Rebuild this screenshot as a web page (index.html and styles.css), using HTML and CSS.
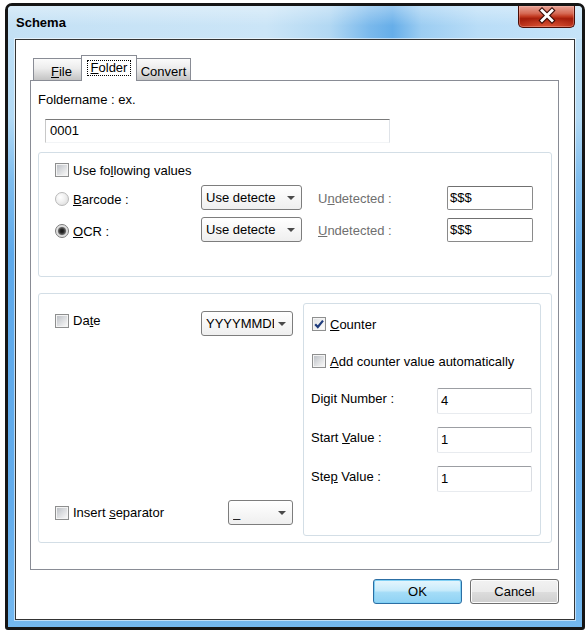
FILE: index.html
```html
<!DOCTYPE html>
<html>
<head>
<meta charset="utf-8">
<title>Schema</title>
<link rel="stylesheet" href="styles.css">
</head>
<body>
<div class="window">
  <div class="titlebar">
    <span class="title">Schema</span>
    <div class="close">
      <svg width="57" height="22" viewBox="0 0 57 22">
        <path d="M24 11 L34 21 M34 11 L24 21" transform="translate(0 -5.5)" stroke="#3a0b05" stroke-width="5" stroke-linecap="square" fill="none"/>
        <path d="M24 11 L34 21 M34 11 L24 21" transform="translate(0 -5.5)" stroke="#ffffff" stroke-width="2.8" stroke-linecap="square" fill="none"/>
      </svg>
    </div>
  </div>
  <div class="client">
    <div class="tabs">
      <div class="tab tab-file"><u>F</u>ile</div>
      <div class="tab tab-active"><span class="focus"><u>F</u>older</span></div>
      <div class="tab tab-convert">Convert</div>
    </div>
    <div class="panel">
      <div class="top-label">Foldername : ex.</div>
      <div class="tb tb-name">0001</div>

      <div class="group group1">
        <div class="check-label g1-check"><span class="cb"></span><span>Use fo<u>l</u>lowing values</span></div>
        <div class="g1-row">
          <div class="cell-label"><span class="radio radio-off"></span><span><u>B</u>arcode :</span></div>
          <div class="combo combo-use"><span class="val">Use detecte</span><span class="arrow"></span></div>
          <div class="cell-undet">U<u>n</u>detected :</div>
          <div class="tb tb-dollar">$$$</div>
        </div>
        <div class="g1-row">
          <div class="cell-label"><span class="radio radio-on"></span><span><u>O</u>CR :</span></div>
          <div class="combo combo-use"><span class="val">Use detecte</span><span class="arrow"></span></div>
          <div class="cell-undet"><u>U</u>ndetected :</div>
          <div class="tb tb-dollar">$$$</div>
        </div>
      </div>

      <div class="group group2">
        <div class="left-col">
          <div class="row-date">
            <div class="check-label date-check"><span class="cb"></span><span>Da<u>t</u>e</span></div>
            <div class="combo combo-date"><span class="val">YYYYMMDD</span><span class="arrow"></span></div>
          </div>
          <div class="row-sep">
            <div class="check-label"><span class="cb"></span><span>Insert <u>s</u>eparator</span></div>
            <div class="combo combo-sep"><span class="val">_</span><span class="arrow"></span></div>
          </div>
        </div>
        <div class="group counter">
          <div class="check-label c-row-a"><span class="cb cb-on"><svg width="12" height="12" viewBox="0 0 12 12"><path d="M2.2 6.2 L4.8 9 L10 2.6" stroke="#1f3c7c" stroke-width="2.2" fill="none"/></svg></span><span><u>C</u>ounter</span></div>
          <div class="check-label c-row-b"><span class="cb"></span><span><u>A</u>dd counter value automatically</span></div>
          <div class="field-row first-field">
            <span class="field-label">Di<u>g</u>it Number :</span>
            <div class="tb tb-num">4</div>
          </div>
          <div class="field-row">
            <span class="field-label">Start <u>V</u>alue :</span>
            <div class="tb tb-num">1</div>
          </div>
          <div class="field-row">
            <span class="field-label">Ste<u>p</u> Value :</span>
            <div class="tb tb-num">1</div>
          </div>
        </div>
      </div>
    </div>
    <div class="buttons">
      <div class="btn btn-ok">OK</div>
      <div class="btn btn-cancel">Cancel</div>
    </div>
  </div>
</div>
</body>
</html>
```
FILE: styles.css
```css
* { box-sizing: border-box; }

body {
  margin: 0;
  background: #ffffff;
  font-family: "Liberation Sans", Arial, sans-serif;
  font-size: 13px;
  color: #000;
}

u { text-decoration: underline; text-underline-offset: 1px; }

.window {
  margin: 3px 0 0 5px;
  width: 580px;
  height: 627px;
  border: 3px solid #151515;
  border-radius: 7px 7px 3px 3px;
  padding: 0 7px 7px;
  display: flex;
  flex-direction: column;
  background: linear-gradient(180deg, #c3e2f7 0%, #b3daf5 18%, #7fbdee 28%, #5ea9ea 40%, #62acec 80%, #74b8ef 100%);
}

.titlebar {
  height: 33px;
  margin: 0 -7px;
  padding: 0 7px 0 8px;
  display: flex;
  justify-content: space-between;
  align-items: flex-start;
  border-radius: 4px 4px 0 0;
  background:
    linear-gradient(180deg, rgba(255,255,255,0.35) 0%, rgba(255,255,255,0) 60%),
    linear-gradient(90deg, #c4e1f5 0%, #cbe5f7 45%, #b2d8f3 56%, #7ab9ec 63%, #66aee9 67%, #9ccdf2 72%, #b9ddf7 82%, #c6e4f9 100%);
}

.title {
  font-weight: bold;
  line-height: 34px;
  color: #000;
}

.close {
  width: 57px;
  height: 22px;
  border: 1px solid #4a0d06;
  border-top: none;
  border-radius: 0 0 5px 5px;
  background:
    radial-gradient(ellipse 60% 45% at 50% 100%, rgba(255,120,80,0.55), rgba(255,120,80,0) 100%),
    linear-gradient(180deg, #e7a396 0%, #d66a55 35%, #c23a21 50%, #a51e0b 60%, #b52c16 100%);
  box-shadow: inset 0 0 0 1px rgba(255,200,190,0.35);
}

.close svg { display: block; margin: -1px 0 0 -1px; }

.client {
  flex: 1;
  background: #ffffff;
  border: 1px solid #343434;
  box-shadow: 0 0 0 1px rgba(255,255,255,0.55);
  padding: 15px 15px 15px 14px;
  display: flex;
  flex-direction: column;
}

.tabs {
  display: flex;
  align-items: flex-end;
  height: 25px;
  padding-left: 3px;
}

.tab {
  height: 22px;
  border: 1px solid #898c95;
  border-bottom: none;
  line-height: 15px;
  padding-top: 5px;
  text-align: center;
  background: linear-gradient(180deg, #fbfbfb 0%, #ececec 45%, #d9d9d9 70%, #c4c4c4 100%);
}

.tab-file { width: 48px; padding-left: 8px; border-right: none; }
.tab-convert { width: 54px; border-left: none; }

.tab-active {
  width: 56px;
  height: 26px;
  margin-bottom: -1px;
  padding-top: 4px;
  background: #ffffff;
  position: relative;
  z-index: 1;
}

.focus {
  display: inline-block;
  line-height: 14px;
  border: 1px dotted #000;
  padding: 0 3px;
}

.panel {
  height: 490px;
  border: 1px solid #898c95;
  background: #ffffff;
  padding: 11px 6px 0 7px;
  display: flex;
  flex-direction: column;
}

.top-label { line-height: 16px; }

.tb {
  background: #fff;
  white-space: nowrap;
  overflow: hidden;
}

.tb-name {
  margin: 11px 0 0 7px;
  width: 345px;
  height: 24px;
  line-height: 22px;
  padding-left: 4px;
  border-top: 1px solid #7a7a7a;
  border-left: 1px solid #c8c8c8;
  border-right: 1px solid #dfe3e8;
  border-bottom: 1px solid #f2f4f6;
}

.group {
  border: 1px solid #d3dee6;
  border-radius: 3px;
}

.group1 {
  margin-top: 9px;
  height: 125px;
  padding: 9px 0 0 16px;
}

.check-label {
  display: flex;
  align-items: center;
  gap: 4px;
  line-height: 15px;
  white-space: nowrap;
}

.g1-check { height: 16px; }

.g1-row {
  display: flex;
  align-items: center;
  height: 25px;
  margin-top: 7px;
}

.cell-label {
  width: 146px;
  display: flex;
  align-items: center;
  gap: 4px;
  padding-top: 3px;
}

.cell-undet {
  width: 145px;
  padding-left: 16px;
  padding-top: 2px;
  color: #6f6f6f;
}

.tb-dollar {
  width: 86px;
  height: 24px;
  line-height: 22px;
  padding-left: 2px;
  border: 1px solid #8a8a8a;
  border-top-color: #707070;
  border-radius: 2px;
}

.cb {
  flex: none;
  width: 14px;
  height: 14px;
  border: 1px solid #8e8f8f;
  box-shadow: inset 0 0 0 1px #f4f4f4;
  background: linear-gradient(135deg, #b7bbc1 0%, #d8dadd 45%, #f3f3f3 85%, #ffffff 100%);
}

.cb-on {
  background: linear-gradient(135deg, #dfe1e4 0%, #f3f3f3 60%, #ffffff 100%);
  display: flex;
  align-items: center;
  justify-content: center;
}

.cb-on svg { display: block; }

.radio {
  flex: none;
  width: 14px;
  height: 14px;
  border-radius: 50%;
}

.radio-off {
  border: 1px solid #b9b9b9;
  background: radial-gradient(circle at 35% 35%, #ffffff 0%, #f0f0f0 45%, #d6d6d6 100%);
}

.radio-on {
  border: 1px solid #7a7a7a;
  background: radial-gradient(circle at 50% 50%, #141414 0, #2c2c2c 2px, #6a6a6a 3.6px, #dcdcdc 4.6px, #f2f2f2 100%);
}

.combo {
  flex: none;
  height: 25px;
  border: 1px solid #7d7d7d;
  border-radius: 3px;
  background: linear-gradient(180deg, #ffffff 0%, #f7f7f7 50%, #efefef 100%);
  display: flex;
  align-items: center;
  padding-left: 4px;
}

.combo .val {
  flex: 1;
  overflow: hidden;
  white-space: nowrap;
  line-height: 15px;
}

.arrow {
  flex: none;
  width: 0;
  height: 0;
  border-left: 4px solid transparent;
  border-right: 4px solid transparent;
  border-top: 4px solid #4a4a4a;
  margin: 1px 6px 0 4px;
}

.combo-use { width: 101px; }
.combo-date { width: 92px; }
.combo-sep { width: 65px; }

.group2 {
  margin-top: 16px;
  height: 250px;
  display: flex;
  gap: 10px;
  padding: 9px 10px 6px 16px;
}

.left-col {
  width: 238px;
  display: flex;
  flex-direction: column;
  justify-content: space-between;
  padding: 8px 0 11px;
}

.row-date {
  height: 25px;
  display: flex;
  justify-content: space-between;
  align-items: flex-start;
}

.date-check { margin-top: 2px; }

.row-sep {
  height: 25px;
  display: flex;
  justify-content: space-between;
  align-items: center;
}

.counter {
  width: 238px;
  padding: 12px 8px 0 7px;
  display: flex;
  flex-direction: column;
}

.c-row-a { height: 16px; padding-left: 1px; }
.c-row-b { height: 16px; padding-left: 1px; margin-top: 21px; }

.field-row {
  display: flex;
  justify-content: space-between;
  align-items: flex-start;
  height: 26px;
  margin-top: 13px;
}

.first-field { margin-top: 19px; }

.field-label {
  padding-top: 3px;
  line-height: 15px;
  white-space: nowrap;
}

.tb-num {
  width: 95px;
  height: 26px;
  line-height: 24px;
  padding-left: 3px;
  border-top: 1px solid #9c9ea3;
  border-left: 1px solid #dadde2;
  border-right: 1px solid #dadde2;
  border-bottom: 1px solid #e8ebef;
  border-radius: 2px;
}

.buttons {
  display: flex;
  justify-content: flex-end;
  gap: 8px;
  margin-top: 9px;
}

.btn {
  width: 89px;
  height: 25px;
  border-radius: 3px;
  text-align: center;
  line-height: 23px;
}

.btn-ok {
  border: 1px solid #2c6ea3;
  background: linear-gradient(180deg, #e6f6fd 0%, #c8ebfb 45%, #a4dcf7 55%, #8fd2f4 100%);
  box-shadow: inset 0 0 0 1px #7fd0f5;
}

.btn-cancel {
  border: 1px solid #707070;
  background: linear-gradient(180deg, #f2f2f2 0%, #ebebeb 50%, #dddddd 51%, #cfcfcf 100%);
  box-shadow: inset 0 0 0 1px #fcfcfc;
}
```
